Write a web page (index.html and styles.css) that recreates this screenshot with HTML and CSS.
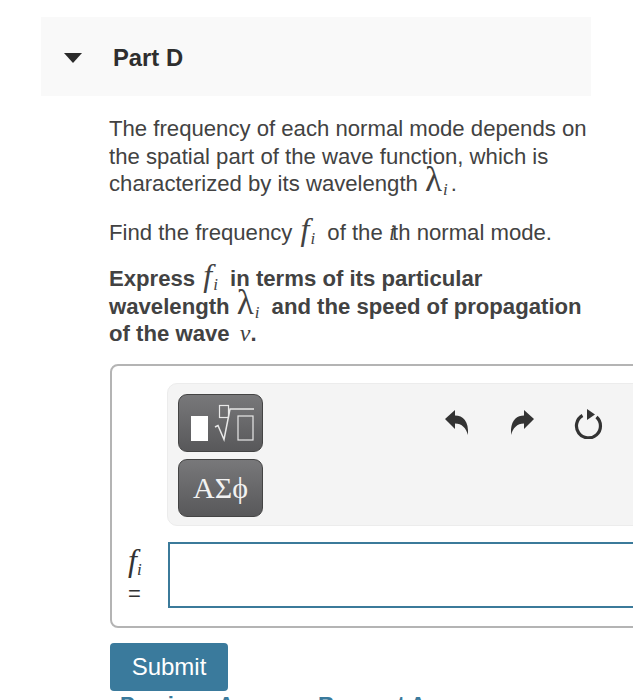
FILE: index.html
```html
<!DOCTYPE html>
<html lang="en">
<head>
<meta charset="utf-8">
<title>Part D</title>
<link rel="stylesheet" href="styles.css">
</head>
<body>
<div class="page">
  <header class="part-head">
    <svg class="caret" width="18" height="10" viewBox="0 0 18 10"><path d="M0 0H18L9 10Z" fill="#2b2b2b"/></svg>
    <h2 class="part-title">Part D</h2>
  </header>
  <section class="content">
    <p class="para first">The frequency of each normal mode depends on the spatial part of the wave function, which is characterized by its wavelength <span class="math lam">λ</span><sub class="sub">i</sub><span class="dot">.</span></p>
    <p class="para second">Find the frequency <span class="math big">f</span><sub class="sub">i</sub> of the <span class="math ith">i</span>th normal mode.</p>
    <p class="para strong">Express <span class="math big">f</span><sub class="sub">i</sub> in terms of its particular wavelength <span class="math lam">λ</span><sub class="sub">i</sub> and the speed of propagation of the wave <span class="math vee">v</span>.</p>
    <div class="answer">
      <div class="toolbar">
        <div class="tool-buttons">
          <button class="tool" type="button" aria-label="Templates">
            <svg class="tool-icon" width="83" height="56" viewBox="0 0 83 56">
              <rect x="12" y="21" width="17" height="25" fill="#fff"/>
              <rect x="40.500" y="10.500" width="9" height="12" fill="none" stroke="#e8e8e8" stroke-width="1.200"/>
              <path d="M36 32l3-1.500 6 14 6-30.500h24" fill="none" stroke="#e8e8e8" stroke-width="1.500"/>
              <rect x="59" y="21" width="15" height="24" fill="none" stroke="#e8e8e8" stroke-width="1.200"/>
            </svg>
          </button>
          <button class="tool greek" type="button">ΑΣϕ</button>
        </div>
        <div class="tool-actions">
          <svg class="action" width="27" height="26" viewBox="0 0 27 26"><path d="M0 10L10 1V6.500C18 6.500 24 12 23 26C21 19 17 14.500 10 14.500V20Z" fill="#333"/></svg>
          <svg class="action" width="23" height="26" viewBox="0 0 23 26"><path d="M23 10L13 1V6.500C5 6.500 -1 12 0 26C2 19 6 14.500 13 14.500V20Z" fill="#333"/></svg>
          <svg class="action" width="30" height="30" viewBox="0 0 30 30"><path d="M9.500 6.500A12 12 0 1 0 23.500 8" fill="none" stroke="#333" stroke-width="3.200"/><path d="M14 0L22 5.500L14 11Z" fill="#333"/></svg>
        </div>
      </div>
      <div class="entry">
        <div class="entry-label"><span class="entry-var"><span class="math label-f">f</span><sub class="sub label-i">i</sub></span><span class="equals">=</span></div>
        <div class="entry-field"></div>
      </div>
    </div>
    <button class="submit" type="button">Submit</button>
    <div class="links"><span>Previous Answers</span><span>Request Answer</span></div>
  </section>
</div>
</body>
</html>
```
FILE: styles.css
```css
html, body { margin: 0; padding: 0; background: #fff; }
body { width: 633px; height: 700px; overflow: hidden; font-family: "Liberation Sans", Arial, sans-serif; color: #424242; }
.page { padding-top: 17px; width: 633px; overflow: hidden; }
.part-head { margin-left: 41px; width: 550px; height: 79px; background: #f9f9f9; display: flex; align-items: center; }
.caret { margin: 2px 0 0 23px; flex: none; }
.part-title { margin: 2px 0 0 31px; font-size: 23.800px; font-weight: bold; color: #2e2e2e; line-height: 1; }
.content { padding: 19px 0 0 109px; }
.para { margin: 0; width: 490px; font-size: 22.150px; line-height: 27.500px; }
.first { margin-bottom: 21px; }
.second { margin-bottom: 19px; }
.strong { font-weight: bold; margin-bottom: 16px; }
.math { font-family: "Liberation Serif", "Times New Roman", serif; font-style: italic; font-weight: normal; }
.big { font-size: 32px; line-height: 0; margin-left: 2px; }
.lam { font-size: 35px; line-height: 0; font-style: normal; margin-left: 1px; }
.ith { margin-right: -3px; }
.vee { font-size: 24px; margin-left: 4px; }
.sub { font-family: "Liberation Serif", serif; font-style: italic; font-weight: normal; font-size: 17px; line-height: 0; vertical-align: -4px; margin: 0 6px 0 1px; }
.dot { margin-left: -3px; }
.answer { margin-left: 1px; width: 700px; height: 260px; border: 2px solid #b4b4b4; border-radius: 8px; display: flex; flex-direction: column; }
.toolbar { margin: 17px 0 0 55px; height: 141px; background: #f4f4f4; border: 1px solid #ececec; border-radius: 10px; display: flex; }
.tool-buttons { padding: 10px 0 0 10px; display: flex; flex-direction: column; gap: 7px; }
.tool { width: 85px; height: 58px; padding: 0; border: 1px solid #444; border-radius: 9px; background: linear-gradient(#78787a, #58585a); display: flex; align-items: center; justify-content: center; color: #f2f2f2; }
.tool-icon { display: block; }
.greek { font-family: "Liberation Serif", serif; font-size: 30px; }
.tool-actions { margin-left: 182px; padding-top: 25px; display: flex; align-items: flex-start; gap: 39px; }
.action { flex: none; }
.entry { margin: 16px 0 0 16px; display: flex; gap: 17px; }
.entry-label { width: 23px; display: flex; flex-direction: column; align-items: flex-start; color: #333; padding-top: 1px; }
.entry-var { white-space: nowrap; line-height: 34px; }
.label-f { font-size: 32px; font-weight: normal; }
.label-i { margin: 0; }
.equals { font-size: 22px; margin-top: -1px; line-height: 24px; }
.entry-field { width: 600px; height: 62px; background: #fff; border: 2px solid #3b7a9a; }
.submit { display: block; margin: 15px 0 0 1px; width: 118px; height: 48px; border: 0; border-radius: 4px; background: #3a7a9c; color: #fff; font-family: "Liberation Sans", sans-serif; font-size: 24px; padding: 0; }
.links { margin: 1px 0 0 11px; display: flex; gap: 8px; font-size: 22px; font-weight: bold; color: #3a7a9c; line-height: 26px; }
```
